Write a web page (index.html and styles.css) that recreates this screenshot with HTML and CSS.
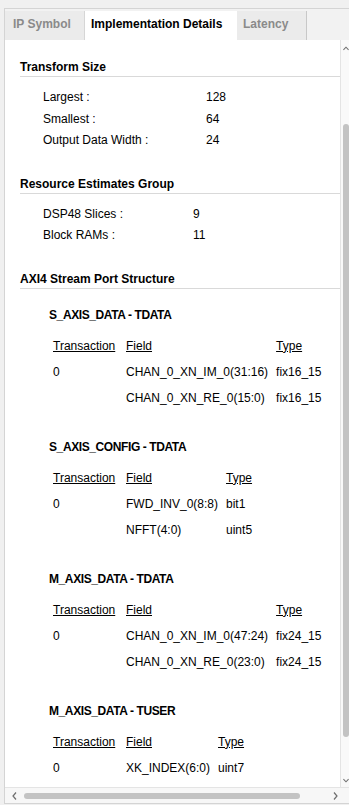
FILE: index.html
```html
<!DOCTYPE html>
<html>
<head>
    <title>Implementation Details</title>
    <link rel="stylesheet" href="styles.css">
</head>
<body>
    <div class="frame">
        <div class="tabs">
            <div class="tab tab-ip">IP Symbol</div>
            <div class="tab tab-active">Implementation Details</div>
            <div class="tab tab-latency">Latency</div>
        </div>

        <div class="view">
            <div class="content">
                <div class="section">
                    <div class="section-title">Transform Size</div>
                    <div class="props props-wide">
                        <div class="prop"><span class="prop-label">Largest :</span><span>128</span></div>
                        <div class="prop"><span class="prop-label">Smallest :</span><span>64</span></div>
                        <div class="prop"><span class="prop-label">Output Data Width :</span><span>24</span></div>
                    </div>
                </div>

                <div class="section">
                    <div class="section-title">Resource Estimates Group</div>
                    <div class="props props-narrow">
                        <div class="prop"><span class="prop-label">DSP48 Slices :</span><span>9</span></div>
                        <div class="prop"><span class="prop-label">Block RAMs :</span><span>11</span></div>
                    </div>
                </div>

                <div class="section">
                    <div class="section-title">AXI4 Stream Port Structure</div>

                    <div class="port">
                        <div class="port-title">S_AXIS_DATA - TDATA</div>
                        <table class="port-table">
                            <tr><th>Transaction</th><th>Field</th><th>Type</th></tr>
                            <tr><td>0</td><td>CHAN_0_XN_IM_0(31:16)</td><td>fix16_15</td></tr>
                            <tr><td></td><td>CHAN_0_XN_RE_0(15:0)</td><td>fix16_15</td></tr>
                        </table>
                    </div>

                    <div class="port">
                        <div class="port-title">S_AXIS_CONFIG - TDATA</div>
                        <table class="port-table">
                            <tr><th>Transaction</th><th>Field</th><th>Type</th></tr>
                            <tr><td>0</td><td>FWD_INV_0(8:8)</td><td>bit1</td></tr>
                            <tr><td></td><td>NFFT(4:0)</td><td>uint5</td></tr>
                        </table>
                    </div>

                    <div class="port">
                        <div class="port-title">M_AXIS_DATA - TDATA</div>
                        <table class="port-table">
                            <tr><th>Transaction</th><th>Field</th><th>Type</th></tr>
                            <tr><td>0</td><td>CHAN_0_XN_IM_0(47:24)</td><td>fix24_15</td></tr>
                            <tr><td></td><td>CHAN_0_XN_RE_0(23:0)</td><td>fix24_15</td></tr>
                        </table>
                    </div>

                    <div class="port">
                        <div class="port-title">M_AXIS_DATA - TUSER</div>
                        <table class="port-table">
                            <tr><th>Transaction</th><th>Field</th><th>Type</th></tr>
                            <tr><td>0</td><td>XK_INDEX(6:0)</td><td>uint7</td></tr>
                        </table>
                    </div>
                </div>
            </div>

            <div class="vscroll">
                <div class="arrow-up">
                    <svg width="7" height="5" viewBox="0 0 7 5"><polyline points="0.5,4 3.5,1 6.5,4" fill="none" stroke="#6e6e6e" stroke-width="1.2"/></svg>
                </div>
                <div class="vthumb"></div>
                <div class="arrow-down">
                    <svg width="7" height="5" viewBox="0 0 7 5"><polyline points="0.5,1 3.5,4 6.5,1" fill="none" stroke="#6e6e6e" stroke-width="1.2"/></svg>
                </div>
            </div>
        </div>

        <div class="hscroll">
            <div class="arrow-left">
                <svg width="5" height="8" viewBox="0 0 5 8"><polyline points="4,0.5 1,4 4,7.5" fill="none" stroke="#6e6e6e" stroke-width="1.2"/></svg>
            </div>
            <div class="hthumb"></div>
            <div class="arrow-right">
                <svg width="5" height="8" viewBox="0 0 5 8"><polyline points="1,0.5 4,4 1,7.5" fill="none" stroke="#6e6e6e" stroke-width="1.2"/></svg>
            </div>
        </div>
    </div>
</body>
</html>
```

FILE: styles.css
```css
body {
    margin: 0;
    background: #f0f0f0;
    font-family: "Liberation Sans", Arial, sans-serif;
    font-size: 12px;
    color: #000;
    overflow: hidden;
}
.frame {
    margin: 8px 0 0 4px;
    width: 345px;
    border-top: 1px solid #d4d4d4;
    border-left: 1px solid #d4d4d4;
    border-bottom: 1px solid #d4d4d4;
}

/* tab strip */
.tabs {
    display: flex;
    height: 31px;
    padding-top: 2px;
    box-sizing: border-box;
    background: #f2f2f2;
}
.tab {
    height: 29px;
    line-height: 27px;
    padding-bottom: 2px;
    box-sizing: border-box;
    font-weight: bold;
    color: #8a8a8a;
    background: #ebebeb;
    white-space: nowrap;
}
.tab-ip { width: 79px; padding-left: 8px; }
.tab-active {
    width: 153px;
    padding-left: 6px;
    color: #000;
    background: #fff;
    border-left: 1px solid #d6d6d6;
}
.tab-latency {
    width: 70px;
    padding-left: 6px;
    border-right: 1px solid #c8c8c8;
}

/* scrolled view */
.view {
    display: grid;
    grid-template-columns: 335px 9px;
    height: 747px;
    background: #fff;
}
.content {
    overflow: hidden;
    padding-top: 20px;
}
.section + .section { margin-top: 25px; }
.section-title {
    margin-left: 15px;
    line-height: 14px;
    padding-bottom: 2px;
    border-bottom: 1px solid #d9d9d9;
    font-weight: bold;
}
.props { padding: 10px 0 0 38px; }
.prop {
    display: flex;
    line-height: 21.5px;
}
.props-wide .prop-label { width: 163px; }
.props-narrow .prop-label { width: 150px; }

.port { margin: 19px 0 0 44px; }
.port + .port { margin-top: 29px; }
.port-title {
    font-weight: bold;
    letter-spacing: -0.4px;
    line-height: 14px;
    margin-bottom: 11px;
}
.port-table {
    margin-left: 4px;
    border-collapse: collapse;
}
.port-table th,
.port-table td {
    padding: 0 8px 0 0;
    height: 26px;
    line-height: 26px;
    text-align: left;
    white-space: nowrap;
}
.port-table th {
    font-weight: normal;
    text-decoration: underline;
}
.port-table th:first-child,
.port-table td:first-child { width: 65px; }

/* scrollbars */
.vscroll {
    display: flex;
    flex-direction: column;
    border-left: 1px solid #e4e4e4;
    background: #f9f9f9;
}
.arrow-up {
    height: 16px;
    display: flex;
    align-items: center;
    padding-left: 2px;
}
.vthumb {
    margin: 68px 0 0 2px;
    width: 6px;
    height: 613px;
    border-radius: 3px;
    background: #c3c3c3;
}
.arrow-down {
    margin-top: auto;
    height: 14px;
    display: flex;
    align-items: center;
    padding-left: 2px;
}
.hscroll {
    display: flex;
    align-items: center;
    height: 16px;
    box-sizing: border-box;
    border-top: 1px solid #e4e4e4;
    background: #f7f7f7;
}
.arrow-left {
    width: 18px;
    display: flex;
    justify-content: center;
}
.hthumb {
    margin-left: 1px;
    width: 276px;
    height: 6px;
    border-radius: 3px;
    background: #c3c3c3;
}
.arrow-right {
    margin: 0 11px 0 auto;
    width: 8px;
    display: flex;
    justify-content: center;
}
```
